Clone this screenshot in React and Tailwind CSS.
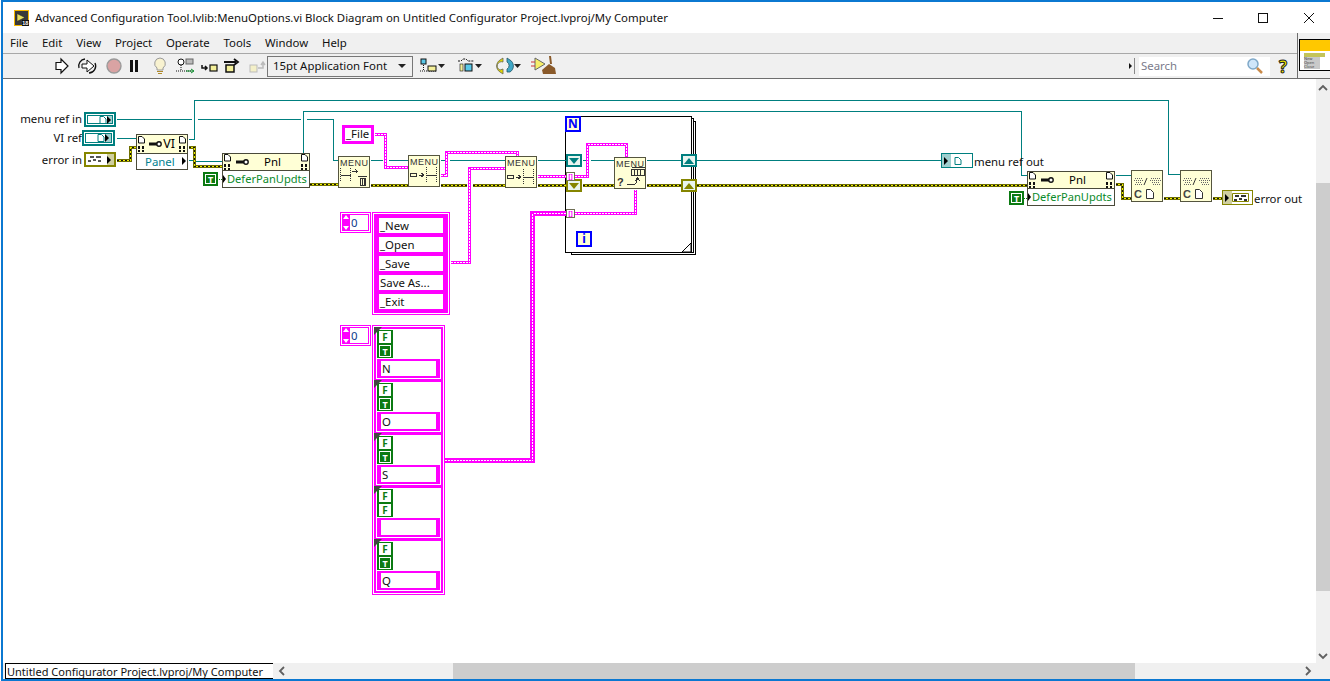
const uiFont = "font-['Noto_Sans','Open_Sans',sans-serif]";

const Tb = ({ w = 24, children, className = "" }) => (
  <svg width={w} height="20" viewBox={`0 0 ${w} 20`} className={`shrink-0 ${className}`}>
    {children}
  </svg>
);

function TealWire({ d }) {
  return <path d={d} fill="none" stroke="#007f7f" strokeWidth="1" shapeRendering="crispEdges" />;
}

function ErrWire({ d }) {
  return (
    <g fill="none" shapeRendering="crispEdges">
      <path d={d} stroke="#6f6f00" strokeWidth="3" />
      <path d={d} stroke="#111" strokeWidth="1" strokeDasharray="2 2" />
      <path d={d} stroke="#f0f000" strokeWidth="1" strokeDasharray="2 2" strokeDashoffset="2" />
    </g>
  );
}

function PinkWire({ d, thick }) {
  return (
    <g fill="none" shapeRendering="crispEdges">
      <path d={d} stroke="#ff00ff" strokeWidth={thick ? 5 : 3} />
      <path d={d} stroke="#fff" strokeWidth="1" strokeDasharray="2 1" />
    </g>
  );
}

function DocIcon() {
  return (
    <svg width="9" height="18" viewBox="0 0 9 18" className="shrink-0">
      <path d="M1.500 1.500h3.500l2.500 2.500v4H1.500z" fill="#fff" stroke="#111" strokeWidth="1" />
      <path d="M1 11h2v3H1zM1 15h2v2H1zM5 11h2v3H5zM5 15h2v2H5z" fill="#111" />
    </svg>
  );
}

function KeyIcon({ className = "" }) {
  return (
    <svg width="13" height="8" viewBox="0 0 13 8" className={`shrink-0 ${className}`}>
      <path d="M0 2.500h8v3H0z" fill="#111" />
      <circle cx="10" cy="4" r="2.200" fill="#fff" stroke="#111" strokeWidth="1.400" />
    </svg>
  );
}

function TrueConst({ className }) {
  return (
    <div className={`absolute flex h-[14px] w-[15px] items-center justify-center bg-[#0b7a12] ${className}`}>
      <div className="flex h-[10px] w-[11px] items-center justify-center border border-white text-[9px] font-bold leading-none text-white">
        T
      </div>
    </div>
  );
}

function MenuNode({ className, children }) {
  return (
    <svg width="32" height="32" viewBox="0 0 32 32" className={`absolute ${className}`}>
      <rect x=".5" y=".5" width="31" height="31" fill="#ffffd6" stroke="#55553f" />
      <text x="2" y="9.500" fontFamily="Liberation Sans" fontSize="9" fill="#333" letterSpacing=".5">
        MENU
      </text>
      <g fill="none" stroke="#333" shapeRendering="crispEdges">
        {children}
      </g>
    </svg>
  );
}

function ClearNode({ className }) {
  return (
    <svg width="32" height="32" viewBox="0 0 32 32" className={`absolute ${className}`}>
      <rect x=".5" y=".5" width="31" height="31" fill="#ffffd6" stroke="#55553f" />
      <g fill="none" stroke="#666" strokeDasharray="1 1" shapeRendering="crispEdges">
        <path d="M3.500 8.500h8M2.500 10.500h9M4.500 12.500h6M3.500 14.500h7" />
        <path d="M19.500 8.500h9M18.500 10.500h11M20.500 12.500h8M21.500 14.500h7" />
      </g>
      <path d="M13 15l3-7" stroke="#333" fill="none" />
      <text x="3" y="28" fontFamily="Liberation Sans" fontSize="11" fontWeight="700" fill="#444">C</text>
      <path d="M15.500 19.500h4l3 3v6h-7z" fill="#fff" stroke="#333" />
    </svg>
  );
}

function PropNode({ className }) {
  return (
    <div className={`absolute h-[35px] w-[88px] border border-[#4a4a3a] bg-white ${className}`}>
      <div className="flex h-[17px] items-center border-b border-[#4a4a3a] bg-[#ffffd6] leading-none">
        <DocIcon />
        <KeyIcon className="ml-[4px]" />
        <span className="ml-[15px]">Pnl</span>
        <span className="ml-auto"><DocIcon /></span>
      </div>
      <div className="flex h-[16px] items-center text-[11.1px] leading-none text-[#0a8a2a]">
        <span className="mr-[1px] h-0 w-0 border-y-[4px] border-l-[3px] border-y-transparent border-l-black" />
        DeferPanUpdts
      </div>
    </div>
  );
}

function StringCell({ children }) {
  return (
    <div className="flex h-[15px] items-center bg-white pl-[1px] text-[11.4px] leading-none text-[#111]">{children}</div>
  );
}

function IndexBox({ className }) {
  return (
    <div className={`absolute flex h-[21px] w-[31px] border border-[#ff00ff] p-[1px] ${className}`}>
      <div className="flex w-[7px] flex-col items-center justify-between bg-[#ff00ff] py-[1px]">
        <div className="h-0 w-0 border-x-[3px] border-b-[4px] border-x-transparent border-b-white" />
        <div className="h-0 w-0 border-x-[3px] border-t-[4px] border-x-transparent border-t-white" />
      </div>
      <div className="flex flex-1 items-center border border-[#ff00ff] pl-[1px] text-[11.4px] leading-none text-[#0a3a8a]">0</div>
    </div>
  );
}

function FConst() {
  return (
    <div className="flex h-[12px] w-[12px] items-center justify-center bg-white text-[10px] font-bold leading-none text-[#0b7a12]">
      F
    </div>
  );
}

function TConst() {
  return (
    <div className="flex h-[12px] w-[12px] items-center justify-center border border-white text-[9px] font-bold leading-none text-white">
      T
    </div>
  );
}

function BoolCluster({ second, text }) {
  return (
    <div className="relative h-[52px] border border-[#ff00ff] bg-white p-[1px]">
      <div className="absolute -left-[2px] -top-[2px] h-0 w-0 border-r-[8px] border-t-[8px] border-r-transparent border-t-[#444]" />
      <div className="flex h-[28px] w-[16px] flex-col items-center justify-between bg-[#0b7a12] px-[2px] py-[1px]">
        <FConst />
        {second === "T" ? <TConst /> : <FConst />}
      </div>
      <div className="mt-[1px] h-[19px] bg-[#ff00ff] px-[4px] pt-[2px]">
        <div className="flex h-[15px] items-center bg-white pl-[1px] text-[11.4px] leading-none text-[#111]">{text}</div>
      </div>
    </div>
  );
}

function ShiftReg({ className, down, color }) {
  return (
    <div className={`absolute flex h-[13px] w-[16px] items-center justify-center border-2 bg-[#e9f5f0] ${className}`}>
      <svg width="10" height="6" viewBox="0 0 10 6">
        <path d={down ? "M0 0H10L5 6z" : "M0 6H10L5 0z"} fill={color} />
      </svg>
    </div>
  );
}

function IndexTunnel({ className }) {
  return (
    <div className={`absolute flex h-[9px] w-[9px] items-center justify-center border border-[#6f6f55] bg-white text-[7px] font-bold leading-none text-[#ff00ff] ${className}`}>
      []
    </div>
  );
}

function DocSmall() {
  return (
    <svg width="8" height="8" viewBox="0 0 8 8" className="shrink-0">
      <path d="M1 .5h3.500l2.500 2.500v4.500H1z" fill="#fff" stroke="#007f7f" />
    </svg>
  );
}

function ClusterGlyph() {
  return (
    <svg width="17" height="9" viewBox="0 0 17 9" className="shrink-0">
      <path d="M.5.500h16v8H.500z" fill="#fff" stroke="#858500" />
      <path d="M3 2h4v2H3zM9 2h5v2H9zM2 6h3v2H2zM7 5h3v2H7zM12 6h3v2h-3z" fill="#333" />
    </svg>
  );
}

function RefTerminal({ className }) {
  return (
    <div className={`absolute border-2 border-[#007f7f] p-px ${className}`}>
      <div className="flex h-full items-center border border-[#007f7f] pl-[11px]">
        <DocSmall />
        <span className="relative ml-auto flex h-full w-[7px] items-center bg-[#9fcfcf]">
          <span className="h-0 w-0 border-y-[4px] border-l-[4px] border-y-transparent border-l-black" />
        </span>
      </div>
    </div>
  );
}

function Canvas() {
  return (
    <div className={`relative flex-1 overflow-hidden bg-white text-[11.4px] ${uiFont}`}>
      {/* for loop frame sits under the wires */}
      <div className="absolute left-[568px] top-[42px] h-[134px] w-[125px] border border-black" />
      <div className="absolute left-[565px] top-[39px] h-[135px] w-[126px] border border-black bg-white" />
      <div className="absolute left-[562px] top-[37px] h-[137px] w-[127px] border border-black bg-white">
        <div className="absolute -left-px -top-px flex h-[16px] w-[16px] items-center justify-center border-2 border-[#0000ff] bg-[#ffffd6] text-[12px] font-bold leading-none text-[#0000ff]">
          N
        </div>
        <div className="absolute left-[10px] top-[114px] flex h-[16px] w-[16px] items-center justify-center border-2 border-[#0000ff] bg-[#ffffd6] text-[12px] font-bold leading-none text-[#0000ff]">
          i
        </div>
        <svg width="9" height="9" viewBox="0 0 9 9" className="absolute bottom-0 right-0">
          <path d="M0 9L9 0V9z" fill="#fff" stroke="#000" />
        </svg>
      </div>

      <svg className="absolute left-0 top-0" width="1313" height="585">
        <g transform="translate(-2.5,-78.5)">
          <TealWire d="M116 119H191M197 119H300M306 119H333V160H338" />
          <TealWire d="M116 138H136" />
          <TealWire d="M188 139H194V100H1168V174H1180" />
          <TealWire d="M188 160H195V161H222" />
          <TealWire d="M303 153V111H1021V175H1027" />
          <TealWire d="M370 160H382M388 160H408" />
          <TealWire d="M440 160H444M449 160H505" />
          <TealWire d="M537 160H566" />
          <TealWire d="M582 160H585M590 160H614" />
          <TealWire d="M646 160H681" />
          <TealWire d="M696 160H941" />
          <TealWire d="M1115 175H1131" />
          <path d="M218 179H222M1023 198H1027" stroke="#0b7a12" strokeDasharray="1 1" shapeRendering="crispEdges" />

          <ErrWire d="M116 160H130V147H136" />
          <ErrWire d="M188 147H194V166H222" />
          <ErrWire d="M309 184H338" />
          <ErrWire d="M370 185H408" />
          <ErrWire d="M440 185H466M472 185H505" />
          <ErrWire d="M537 185H566" />
          <ErrWire d="M582 185H614" />
          <ErrWire d="M646 185H681" />
          <ErrWire d="M696 185H1027" />
          <ErrWire d="M1115 184H1122V198H1131" />
          <ErrWire d="M1163 198H1180" />
          <ErrWire d="M1212 198H1222" />

          <PinkWire d="M374 134H385V167H408" />
          <PinkWire d="M440 175H446V152H517V156" />
          <PinkWire d="M450 262H469V168H505" />
          <PinkWire d="M537 176H566" />
          <PinkWire d="M574 176H587V144H626V157" />
          <PinkWire d="M574 213H635V189" />
          <PinkWire thick d="M444 460H532V213H566" />
        </g>
      </svg>

      <span className="absolute right-[1234px] top-[34px] leading-none text-[#111]">menu ref in</span>
      <span className="absolute right-[1234px] top-[53px] leading-none text-[#111]">VI ref</span>
      <span className="absolute right-[1234px] top-[75px] leading-none text-[#111]">error in</span>

      {/* refnum and error terminals */}
      <RefTerminal className="left-[81px] top-[33px] h-[15px] w-[32px]" />
      <RefTerminal className="left-[79px] top-[51px] h-[16px] w-[33px]" />
      <div className="absolute left-[81px] top-[73px] h-[15px] w-[32px] border-2 border-[#858500]">
        <div className="flex h-full items-center bg-white pl-px">
          <svg width="17" height="7" viewBox="0 0 17 7" className="shrink-0">
            <path d="M3 0h4v2H3zM9 0h5v2H9zM1 4h3v2H1zM6 3h3v2H6zM11 4h3v2h-3z" fill="#555" />
          </svg>
          <span className="ml-auto flex h-full w-[7px] items-center bg-[#cfcf9f]">
            <span className="h-0 w-0 border-y-[4px] border-l-[4px] border-y-transparent border-l-black" />
          </span>
        </div>
      </div>

      {/* VI property node */}
      <div className="absolute left-[133px] top-[55px] h-[36px] w-[52px] border border-[#4a4a3a] bg-white">
        <div className="flex h-[19px] items-center justify-between border-b border-[#4a4a3a] bg-[#ffffd6] text-[12.5px] leading-none">
          <DocIcon />
          <div className="flex items-center gap-[1px]">
            <KeyIcon />
            <span>VI</span>
          </div>
          <DocIcon />
        </div>
        <div className="flex h-[15px] items-center pl-[8px] leading-none text-[#007f8f]">Panel</div>
        <span className="absolute right-[1px] top-[22px] h-0 w-0 border-y-[4px] border-l-[4px] border-y-transparent border-l-black" />
      </div>

      <PropNode className="left-[219px] top-[74px]" />
      <TrueConst className="left-[200px] top-[93px]" />

      <div className="absolute left-[339px] top-[46px] flex h-[19px] w-[32px] items-center border-[3px] border-[#ff00ff] bg-white pb-[1px] pl-[1px] leading-none text-[#111]">
        _File
      </div>

      <MenuNode className="left-[335px] top-[77px]">
        <path d="M2.500 12v14M12.500 12v14" strokeDasharray="1 1" />
        <path d="M2.500 19.500h10M14 15.500h5M17.500 13.500l2 2-2 2" />
        <path d="M20 20.500h9M22.500 22.500h5v7h-5zM24.500 23v6M26 23v6" />
      </MenuNode>
      <MenuNode className="left-[405px] top-[76px]">
        <path d="M2.500 18.500h6v3h-6zM11 20h4M13.500 18l2 2-2 2" />
        <path d="M18.500 12v16M28.500 12v16" strokeDasharray="1 1" />
        <path d="M18.500 20.500h10" />
      </MenuNode>
      <MenuNode className="left-[502px] top-[77px]">
        <path d="M2.500 19.500h6v3h-6zM11 21h4M13.500 19l2 2-2 2" />
        <path d="M18.500 13v16M28.500 13v16" strokeDasharray="1 1" />
        <path d="M18.500 21.500h10" />
      </MenuNode>

      <ShiftReg className="left-[563px] top-[75px] border-[#007f7f]" down color="#007f7f" />
      <ShiftReg className="left-[563px] top-[100px] border-[#858500]" down color="#858500" />
      <ShiftReg className="left-[678px] top-[75px] border-[#007f7f]" color="#007f7f" />
      <ShiftReg className="left-[678px] top-[100px] border-[#858500]" color="#858500" />

      <IndexTunnel className="left-[563px] top-[93px]" />
      <IndexTunnel className="left-[563px] top-[130px]" />

      <MenuNode className="left-[611px] top-[78px]">
        <path d="M17.500 10.500h13M17.500 12.500h13v6h-13zM20.500 13v5M23.500 13v5M26.500 13v5" />
        <path d="M13 27.500h8M21.500 27l2-5M21 24l2.500-3 2.500 3" />
        <text x="3" y="29" fontFamily="Liberation Sans" fontSize="11" fontWeight="700" fill="#333" stroke="none">?</text>
      </MenuNode>

      {/* string array */}
      <IndexBox className="left-[337px] top-[133px]" />
      <div className="absolute left-[369px] top-[133px] w-[78px] border border-[#ff00ff] bg-white p-[1px]">
        <div className="flex flex-col gap-[4px] bg-[#ff00ff] px-[5px] py-[4px]">
          <StringCell>_New</StringCell>
          <StringCell>_Open</StringCell>
          <StringCell>_Save</StringCell>
          <StringCell>Save As...</StringCell>
          <StringCell>_Exit</StringCell>
        </div>
      </div>

      {/* boolean and string cluster array */}
      <IndexBox className="left-[337px] top-[246px]" />
      <div className="absolute left-[369px] top-[246px] w-[73px] border border-[#ff00ff] bg-white p-[1px]">
        <div className="flex flex-col gap-[1px] bg-[#ff00ff] p-[1px]">
          <BoolCluster second="T" text="N" />
          <BoolCluster second="T" text="O" />
          <BoolCluster second="T" text="S" />
          <BoolCluster second="F" text="" />
          <BoolCluster second="T" text="Q" />
        </div>
      </div>

      {/* right side */}
      <div className="absolute left-[938px] top-[74px] flex h-[15px] w-[32px] items-center border border-[#007f7f]">
        <span className="mr-[3px] flex h-full w-[9px] items-center bg-[#9fcfcf] pl-[2px]">
          <span className="h-0 w-0 border-y-[4px] border-l-[4px] border-y-transparent border-l-black" />
        </span>
        <DocSmall />
      </div>
      <span className="absolute left-[971px] top-[77px] leading-none text-[#111]">menu ref out</span>

      <PropNode className="left-[1024px] top-[92px]" />
      <TrueConst className="left-[1006px] top-[112px]" />

      <ClearNode className="left-[1128px] top-[91px]" />
      <ClearNode className="left-[1177px] top-[91px]" />

      <div className="absolute left-[1219px] top-[111px] flex h-[15px] w-[31px] items-center border border-[#858500]">
        <span className="flex h-full w-[9px] items-center bg-[#cfcf9f] pl-[2px]">
          <span className="h-0 w-0 border-y-[4px] border-l-[4px] border-y-transparent border-l-black" />
        </span>
        <ClusterGlyph />
      </div>
      <span className="absolute left-[1251px] top-[114px] leading-none text-[#111]">error out</span>
    </div>
  );
}

export default function App() {
  return (
    <div className={`ml-px flex h-[681px] w-[1329px] flex-col overflow-hidden border-b-2 border-l-2 border-t-2 border-[#0b78d1] bg-white ${uiFont}`}>
      {/* title bar */}
      <div className="flex h-[31px] shrink-0 items-center pl-[11px] text-[11.4px] text-[#111]">
        <svg width="15" height="16" viewBox="0 0 15 16" className="shrink-0">
          <rect width="15" height="16" fill="#f5b800" />
          <rect x="1" y="1" width="13" height="14" fill="#3a3a3a" />
          <path d="M3 3.500l8 4-8 4z" fill="#e8e060" stroke="#222" strokeWidth=".6" />
          <rect x="8" y="10" width="7" height="6" fill="#111" />
          <text x="8.300" y="15.400" fontFamily="Liberation Sans" fontSize="5.500" fontWeight="700" fill="#fff">18</text>
        </svg>
        <span className="ml-[6px] whitespace-nowrap">
          Advanced Configuration Tool.lvlib:MenuOptions.vi Block Diagram on Untitled Configurator Project.lvproj/My Computer
        </span>
        <div className="ml-auto flex items-center">
          <svg width="12" height="12" viewBox="0 0 12 12"><path d="M1 6.500h10" stroke="#111" /></svg>
          <svg width="12" height="12" viewBox="0 0 12 12" className="ml-[33px]"><rect x="1.500" y="1.500" width="9" height="9" fill="none" stroke="#111" /></svg>
          <svg width="12" height="12" viewBox="0 0 12 12" className="ml-[34px] mr-[15px]"><path d="M1 1l10 10M11 1L1 11" stroke="#111" /></svg>
        </div>
      </div>

      <div className="flex h-[46px] shrink-0 border-b border-[#6e6e6e]">
        <div className="flex min-w-0 flex-1 flex-col bg-[#f0f0f0]">
          {/* menu */}
          <div className="flex h-[21px] shrink-0 items-center gap-[13.8px] border-b border-[#a8a8a8] pl-[7px] text-[11.4px] text-[#111]">
            <span>File</span>
            <span>Edit</span>
            <span>View</span>
            <span>Project</span>
            <span>Operate</span>
            <span>Tools</span>
            <span>Window</span>
            <span>Help</span>
          </div>
          {/* toolbar */}
          <div className="flex flex-1 items-center pl-[46px]">
            <Tb w={24}>
              <path d="M7 6.500h5V3l7 7-7 7v-3.500H7z" fill="#fff" stroke="#111" strokeWidth="1.200" />
            </Tb>
            <Tb w={28}>
              <path d="M9 8h5V4l7 6-7 6v-4H9z" fill="#fff" stroke="#111" />
              <path d="M6 12A7 7 0 0 1 12 3M22 7A7 7 0 0 1 16 17" fill="none" stroke="#111" strokeWidth="1.300" />
            </Tb>
            <Tb w={20} className="ml-[3px]">
              <circle cx="10" cy="10" r="7" fill="#d9a3a3" stroke="#9a9a9a" strokeWidth="1.400" />
            </Tb>
            <Tb w={20}>
              <path d="M6 4h3v12H6zM11 4h3v12h-3z" fill="#111" />
            </Tb>
            <Tb w={26} className="ml-[3px]">
              <path d="M13 2a5.500 5.500 0 0 0-3 10v2h6v-2a5.500 5.500 0 0 0-3-10z" fill="#f8f2d0" stroke="#9a9a9a" />
              <path d="M10 15h6v1h-6zM11 17h4v1h-4z" fill="#b08a2a" />
            </Tb>
            <Tb w={26}>
              <circle cx="8" cy="6" r="3" fill="#fff" stroke="#111" />
              <rect x="13" y="3" width="7" height="5" fill="#bbb" stroke="#666" />
              <path d="M8 9v6M3 15h16" stroke="#111" strokeDasharray="1 1" fill="none" />
              <path d="M13 15h7M18 13l3 2-3 2" stroke="#0a8a2a" fill="none" />
            </Tb>
            <Tb w={26}>
              <path d="M3 9v3h5M6 10l2 2-2 2" fill="none" stroke="#111" strokeWidth="1.500" />
              <rect x="11" y="9" width="7" height="6" fill="#f4f09a" stroke="#111" strokeWidth="1.200" />
            </Tb>
            <Tb w={24} className="-ml-[3px]">
              <path d="M2 6h12M12 3l4 3-4 3" fill="none" stroke="#111" strokeWidth="1.800" />
              <rect x="4" y="9" width="8" height="7" fill="#f4f09a" stroke="#111" strokeWidth="1.500" />
            </Tb>
            <Tb w={19} className="ml-[2px]">
              <rect x="2" y="9" width="7" height="7" fill="#f4f0c8" stroke="#bbb" />
              <path d="M10 12h5V7M13 9l2-3 2 3" fill="none" stroke="#bbb" strokeWidth="1.500" />
            </Tb>
            <div className="flex h-[21px] w-[146px] shrink-0 items-center border border-[#777] pl-[5px] text-[11.4px] text-[#111]">
              <span>15pt Application Font</span>
              <span className="ml-auto mr-[6px] h-0 w-0 border-x-[4px] border-t-[4px] border-x-transparent border-t-[#222]" />
            </div>
            <Tb w={28} className="ml-[6px]">
              <rect x="2" y="3" width="5" height="5" fill="#5ac8e8" stroke="#111" />
              <path d="M4.500 9v6M1 15h7M10 15h8" stroke="#111" strokeDasharray="1 1" fill="none" />
              <rect x="9" y="10" width="8" height="5" fill="#f4f09a" stroke="#111" />
              <path d="M19 8h7l-3.500 4z" fill="#222" />
            </Tb>
            <Tb w={28} className="ml-[9px]">
              <path d="M2 5h3l2-2h3l2 2h6" fill="none" stroke="#111" strokeDasharray="2 1" />
              <rect x="4" y="8" width="3" height="7" fill="#f4f09a" stroke="#111" strokeWidth=".6" />
              <rect x="9" y="8" width="7" height="7" fill="#5ac8e8" stroke="#111" />
              <path d="M19 8h7l-3.500 4z" fill="#222" />
            </Tb>
            <Tb w={28} className="ml-[10px]">
              <path d="M6 4a7 7 0 0 0 0 12l3 2v-5l-3 1a4 4 0 0 1 3-8V2z" fill="#e4d800" stroke="#665" strokeWidth=".8" />
              <path d="M13 2l3 2a7 7 0 0 1 0 12h-3v-3a4 4 0 0 0 0-7z" fill="#3fa8c8" stroke="#256" strokeWidth=".8" />
              <path d="M20 8h7l-3.500 4z" fill="#222" />
            </Tb>
            <Tb w={26} className="ml-[8px]">
              <path d="M5 2l10 6-10 6z" fill="#f6ee6a" stroke="#666" />
              <path d="M1 6h4M1 10h4" stroke="#c33" />
              <path d="M20 0l1 8" stroke="#8a5a2a" strokeWidth="2" />
              <path d="M12 14l7-6 6 4 1 6H13z" fill="#8a5a2a" />
            </Tb>
            <div className="ml-auto flex items-center">
              <span className="h-0 w-0 border-y-[3px] border-l-[3px] border-y-transparent border-l-[#111]" />
              <span className="ml-[2px] h-[16px] w-px bg-[#888]" />
              <div className="ml-[4px] flex h-[19px] w-[131px] items-center bg-white pl-[2px] text-[11.4px] text-[#7a7a8a]">
                <span>Search</span>
                <svg width="18" height="18" viewBox="0 0 18 18" className="ml-auto mr-[6px]">
                  <circle cx="7" cy="7" r="5" fill="#cfe6fa" stroke="#7fa8c8" strokeWidth="1.500" />
                  <path d="M11 11l5 5" stroke="#c98a4a" strokeWidth="2.500" />
                </svg>
              </div>
              <span className="ml-[9px] mr-[4px] w-[14px] text-[17px] font-bold leading-none text-[#f2ea00] [-webkit-text-stroke:1px_#222]">?</span>
            </div>
          </div>
        </div>
        {/* icon pane */}
        <div className="flex w-[33px] shrink-0 flex-col items-end border-l border-[#6e6e6e] bg-[#f0f0f0] pt-[6px]">
          <div className="h-[32px] w-[31px] border-y border-l border-black bg-white">
            <div className="h-[11px] bg-[#ffc800]" />
            <div className="ml-[4px] mt-[2px] h-[16px] w-[16px] bg-[#c9c9c9] text-[4px] leading-[4px] text-[#444]">
              <div className="h-[4px] w-[21px] bg-[#c4c45a]" />
              New Open Close
            </div>
          </div>
        </div>
      </div>

      {/* diagram and vertical scrollbar */}
      <div className="flex min-h-0 flex-1">
        <Canvas />
        <div className="flex w-[14px] shrink-0 flex-col bg-[#f0f0f0]">
          <div className="flex h-[104px] shrink-0 justify-center pt-[5px]">
            <svg width="10" height="8" viewBox="0 0 10 8"><path d="M1 6l4-4 4 4" fill="none" stroke="#606060" strokeWidth="1.800" /></svg>
          </div>
          <div className="h-[408px] shrink-0 bg-[#cdcdcd]" />
          <div className="mt-auto flex justify-center pb-[3px]">
            <svg width="10" height="8" viewBox="0 0 10 8"><path d="M1 2l4 4 4-4" fill="none" stroke="#606060" strokeWidth="1.800" /></svg>
          </div>
        </div>
      </div>

      {/* status tab and horizontal scrollbar */}
      <div className="flex h-[16px] shrink-0 items-center bg-[#f0f0f0]">
        <div className="ml-[2px] flex h-full w-[268px] shrink-0 items-center overflow-hidden whitespace-nowrap border-y border-l border-black bg-white pl-[1px] text-[11px] leading-none text-[#111]">
          Untitled Configurator Project.lvproj/My Computer
        </div>
        <svg width="8" height="10" viewBox="0 0 8 10" className="ml-[5px] shrink-0"><path d="M6 1L2 5l4 4" fill="none" stroke="#606060" strokeWidth="1.800" /></svg>
        <div className="ml-[167px] h-full w-[682px] shrink-0 bg-[#cdcdcd]" />
        <svg width="8" height="10" viewBox="0 0 8 10" className="ml-[169px] shrink-0"><path d="M2 1l4 4-4 4" fill="none" stroke="#606060" strokeWidth="1.800" /></svg>
      </div>
    </div>
  );
}
